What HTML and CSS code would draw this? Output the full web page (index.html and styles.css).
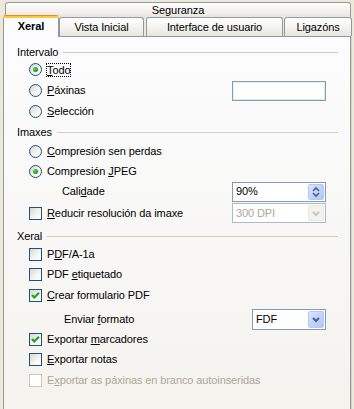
FILE: index.html
```html
<!DOCTYPE html>
<html lang="gl">
<head>
<meta charset="utf-8">
<title>Opcións PDF</title>
<link rel="stylesheet" href="styles.css">
</head>
<body>
<div class="tabs">
  <div class="row1"><div class="tab t-seg">Seguranza</div></div>
  <div class="row2">
    <div class="tab sel t-xeral">Xeral</div>
    <div class="tab t-vista">Vista Inicial</div>
    <div class="tab t-iface">Interface de usuario</div>
    <div class="tab t-liga">Ligazóns</div>
  </div>
</div>
<div class="panel">
  <div class="hdr hdr1"><span>Intervalo</span><i class="rule"></i></div>
  <div class="row h21"><span class="radio on"></span><span class="lbl focus"><u>T</u>odo</span></div>
  <div class="row h21"><span class="radio"></span><span class="lbl"><u>P</u>áxinas</span><span class="edit"></span></div>
  <div class="row h21"><span class="radio"></span><span class="lbl"><u>S</u>elección</span></div>

  <div class="hdr hdr2"><span>Imaxes</span><i class="rule"></i></div>
  <div class="row h19"><span class="radio"></span><span class="lbl"><u>C</u>ompresión sen perdas</span></div>
  <div class="row h20"><span class="radio on"></span><span class="lbl">Compresión <u>J</u>PEG</span></div>
  <div class="row h21 ind1"><span class="lbl0">Cali<u>d</u>ade</span>
    <span class="edit spin"><span class="val">90%</span>
      <span class="btn"><svg width="14" height="14" viewBox="0 0 14 14"><path d="M4 6 L7 3 L10 6" fill="none" stroke="#4D6185" stroke-width="1.6"/><path d="M4 8 L7 11 L10 8" fill="none" stroke="#4D6185" stroke-width="1.6"/></svg></span>
    </span>
  </div>
  <div class="row h22"><span class="cb"></span><span class="lbl"><u>R</u>educir resolución da imaxe</span>
    <span class="combo dis"><span class="val">300 DPI</span>
      <span class="btn"><svg width="14" height="15" viewBox="0 0 14 15"><path d="M4 6 L7 9 L10 6" fill="none" stroke="#C9C7BA" stroke-width="2"/></svg></span>
    </span>
  </div>

  <div class="hdr hdr3"><span>Xeral</span><i class="rule"></i></div>
  <div class="row h20"><span class="cb"></span><span class="lbl">P<u>D</u>F/A-1a</span></div>
  <div class="row h21"><span class="cb"></span><span class="lbl">PDF <u>e</u>tiquetado</span></div>
  <div class="row h20"><span class="cb"><svg width="11" height="11" viewBox="0 0 11 11"><path d="M2 5 L4.3 7.5 L9 2.8" fill="none" stroke="#21A121" stroke-width="2.2"/></svg></span><span class="lbl"><u>C</u>rear formulario PDF</span></div>
  <div class="row h21 ind2 gap4"><span class="lbl0">Enviar <u>f</u>ormato</span>
    <span class="combo fdf"><span class="val">FDF</span>
      <span class="btn"><svg width="14" height="15" viewBox="0 0 14 15"><path d="M4 6 L7 9 L10 6" fill="none" stroke="#4D6185" stroke-width="2"/></svg></span>
    </span>
  </div>
  <div class="row h19"><span class="cb"><svg width="11" height="11" viewBox="0 0 11 11"><path d="M2 5 L4.3 7.5 L9 2.8" fill="none" stroke="#21A121" stroke-width="2.2"/></svg></span><span class="lbl">Exportar <u>m</u>arcadores</span></div>
  <div class="row h21"><span class="cb"></span><span class="lbl"><u>E</u>xportar notas</span></div>
  <div class="row h21 disabled"><span class="cb"></span><span class="lbl">E<u>x</u>portar as páxinas en branco autoinseridas</span></div>
</div>
</body>
</html>
```
FILE: styles.css
```css
html, body {
  margin: 0;
  padding: 0;
}
body {
  width: 354px;
  height: 409px;
  overflow: hidden;
  background: #ECE9D8;
  font-family: "Liberation Sans", Arial, sans-serif;
  font-size: 11px;
  letter-spacing: -0.1px;
  color: #000;
}
u {
  text-decoration: underline;
  text-underline-offset: 1px;
}

/* tabs */
.tabs {
  padding-top: 2px;
}
.row1 {
  display: flex;
  padding-left: 5px;
}
.tab {
  box-sizing: border-box;
  border: 1px solid #919B9C;
  border-bottom: none;
  border-radius: 3px 3px 0 0;
  background: linear-gradient(#FFFFFF, #F0EFEA 70%, #E6E5DE);
  text-align: center;
  line-height: 13px;
  white-space: nowrap;
}
.t-seg {
  width: 346px;
  height: 15px;
  padding-top: 1px;
}
.row2 {
  display: flex;
  align-items: flex-start;
  height: 21px;
  margin-top: -2px;
  padding-left: 3px;
  position: relative;
  z-index: 1;
}
.row2 .tab {
  margin-top: 2px;
  height: 19px;
  padding-top: 3px;
}
.row2 .tab.sel {
  margin-top: 0;
  height: 22px;
  padding-top: 5px;
  border: none;
  font-weight: bold;
  background:
    linear-gradient(#E68B2C 0 1px, #FFC73C 1px 3px, transparent 3px),
    linear-gradient(to right, #919B9C 0 1px, transparent 1px calc(100% - 1px), #919B9C calc(100% - 1px)),
    #FCFCFE;
}
.t-xeral { width: 56px; }
.t-vista { width: 85px; }
.t-iface { width: 137px; margin-left: 2px; }
.t-liga { width: 68px; margin-left: 1px; }

/* panel */
.panel {
  margin-left: 3px;
  width: 348px;
  height: 373px;
  box-sizing: border-box;
  border: 1px solid #919B9C;
  border-bottom: none;
  padding-top: 8px;
  background: linear-gradient(#FCFCFE, #F4F3EE 370px);
  box-shadow: 1px 0 0 #D6D3C3;
}
.hdr {
  display: flex;
  align-items: center;
  padding: 0 12px 0 13px;
  box-sizing: border-box;
  line-height: 13px;
}
.hdr1 { height: 14px; }
.hdr2 { height: 20px; }
.hdr3 { height: 20px; padding-top: 5px; }
.rule {
  flex: 1;
  height: 1px;
  margin-left: 5px;
  background: #D0D0BF;
}

.row {
  display: flex;
  align-items: center;
  box-sizing: border-box;
  padding: 0 24px 0 25px;
  line-height: 13px;
  white-space: nowrap;
}
.h19 { height: 19px; }
.h20 { height: 20px; }
.h21 { height: 21px; }
.h22 { height: 22px; }
.ind1 { padding-left: 58px; }
.ind2 { padding-left: 60px; }
.gap4 { margin-top: 4px; }

.lbl { margin-left: 5px; }
.lbl.focus {
  margin-left: 4px;
  border: 1px dotted #000;
  line-height: 12px;
}
.disabled .lbl { color: #ACA899; }

/* radio */
.radio {
  width: 13px;
  height: 13px;
  box-sizing: border-box;
  border: 1px solid #1C5180;
  border-radius: 50%;
  background: linear-gradient(135deg, #D4D4CE, #F4F4F0 55%, #FFFFFF);
  display: flex;
  align-items: center;
  justify-content: center;
  flex: none;
}
.radio.on::after {
  content: "";
  width: 5px;
  height: 5px;
  border-radius: 50%;
  background: radial-gradient(circle at 35% 35%, #5FD35F, #21A121 60%, #1A8A1A);
}

/* checkbox */
.cb {
  width: 13px;
  height: 13px;
  box-sizing: border-box;
  border: 1px solid #1C5180;
  background: linear-gradient(135deg, #D8D8D2, #F6F6F2 60%, #FFFFFF);
  display: flex;
  align-items: center;
  justify-content: center;
  flex: none;
}
.disabled .cb {
  border-color: #CAC8BB;
  background: #FFFFFF;
}

/* fields */
.edit, .combo {
  margin-left: auto;
  box-sizing: border-box;
  border: 1px solid #7F9DB9;
  background: #FFFFFF;
  display: flex;
  align-items: center;
}
.edit {
  width: 94px;
  height: 20px;
  box-shadow: inset 1px 1px 0 #F0EFE8, inset -1px -1px 0 #E6E4D8;
}
.spin {
  box-shadow: none;
  padding-right: 1px;
}
.combo {
  width: 94px;
  height: 20px;
  padding-right: 1px;
}
.combo.fdf {
  width: 74px;
  height: 21px;
}
.val {
  padding-left: 3px;
  flex: 1;
}
.combo.dis {
  border-color: #A9BACB;
}
.combo.dis .val { color: #ACA899; }
.btn {
  width: 16px;
  height: 16px;
  box-sizing: border-box;
  border: 1px solid #B8C9F1;
  border-radius: 2px;
  background: linear-gradient(135deg, #DCE6FE, #C3D3FD 50%, #B2C6F7);
  display: flex;
  align-items: center;
  justify-content: center;
}
.fdf .btn { height: 17px; }
.dis .btn {
  border-color: #E9E8E0;
  background: #F3F2EC;
}
```
